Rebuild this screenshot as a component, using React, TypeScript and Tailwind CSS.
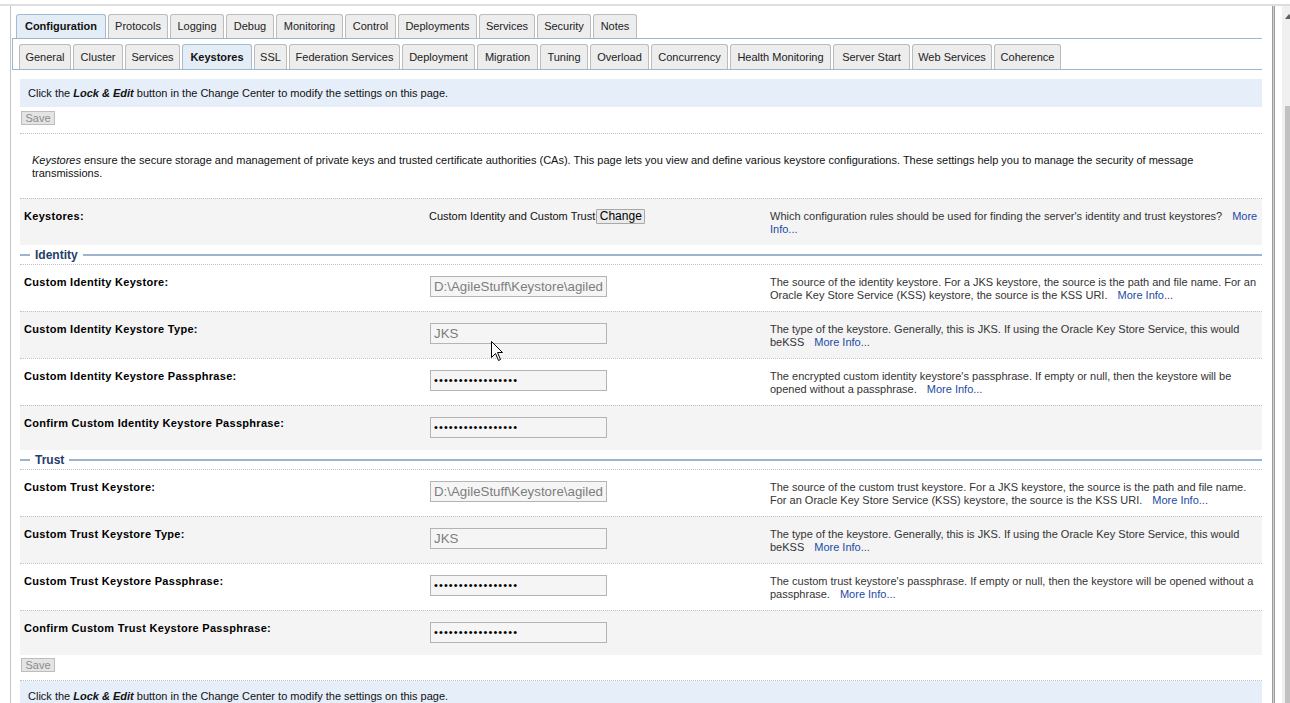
import React from 'react';

// Tabs across the top of the settings page
interface Tab {
  label: string;
  w: string;
  active?: boolean;
}

const mainTabs: Tab[] = [
  { label: 'Configuration', w: 'w-[90px]', active: true },
  { label: 'Protocols', w: 'w-[60px]' },
  { label: 'Logging', w: 'w-[54px]' },
  { label: 'Debug', w: 'w-[48px]' },
  { label: 'Monitoring', w: 'w-[67px]' },
  { label: 'Control', w: 'w-[51px]' },
  { label: 'Deployments', w: 'w-[79px]' },
  { label: 'Services', w: 'w-[56px]' },
  { label: 'Security', w: 'w-[54px]' },
  { label: 'Notes', w: 'w-[44px]' },
];

const subTabs: Tab[] = [
  { label: 'General', w: 'w-[52px]' },
  { label: 'Cluster', w: 'w-[50px]' },
  { label: 'Services', w: 'w-[55px]' },
  { label: 'Keystores', w: 'w-[70px]', active: true },
  { label: 'SSL', w: 'w-[33px]' },
  { label: 'Federation Services', w: 'w-[111px]' },
  { label: 'Deployment', w: 'w-[73px]' },
  { label: 'Migration', w: 'w-[61px]' },
  { label: 'Tuning', w: 'w-[48px]' },
  { label: 'Overload', w: 'w-[59px]' },
  { label: 'Concurrency', w: 'w-[77px]' },
  { label: 'Health Monitoring', w: 'w-[101px]' },
  { label: 'Server Start', w: 'w-[77px]' },
  { label: 'Web Services', w: 'w-[80px]' },
  { label: 'Coherence', w: 'w-[67px]' },
];

interface Field {
  label: string;
  kind: 'text' | 'password';
  value?: string;
  help?: [string, string];
  last?: boolean;
}

const identityFields: Field[] = [
  {
    label: 'Custom Identity Keystore:',
    kind: 'text',
    value: 'D:\\AgileStuff\\Keystore\\agiled',
    help: [
      'The source of the identity keystore. For a JKS keystore, the source is the path and file name. For an',
      'Oracle Key Store Service (KSS) keystore, the source is the KSS URI.',
    ],
  },
  {
    label: 'Custom Identity Keystore Type:',
    kind: 'text',
    value: 'JKS',
    help: [
      'The type of the keystore. Generally, this is JKS. If using the Oracle Key Store Service, this would',
      'beKSS',
    ],
  },
  {
    label: 'Custom Identity Keystore Passphrase:',
    kind: 'password',
    help: [
      "The encrypted custom identity keystore's passphrase. If empty or null, then the keystore will be",
      'opened without a passphrase.',
    ],
  },
  { label: 'Confirm Custom Identity Keystore Passphrase:', kind: 'password', last: true },
];

const trustFields: Field[] = [
  {
    label: 'Custom Trust Keystore:',
    kind: 'text',
    value: 'D:\\AgileStuff\\Keystore\\agiled',
    help: [
      'The source of the custom trust keystore. For a JKS keystore, the source is the path and file name.',
      'For an Oracle Key Store Service (KSS) keystore, the source is the KSS URI.',
    ],
  },
  {
    label: 'Custom Trust Keystore Type:',
    kind: 'text',
    value: 'JKS',
    help: [
      'The type of the keystore. Generally, this is JKS. If using the Oracle Key Store Service, this would',
      'beKSS',
    ],
  },
  {
    label: 'Custom Trust Keystore Passphrase:',
    kind: 'password',
    help: [
      "The custom trust keystore's passphrase. If empty or null, then the keystore will be opened without a",
      'passphrase.',
    ],
  },
  { label: 'Confirm Custom Trust Keystore Passphrase:', kind: 'password', last: true },
];

const TabButton: React.FC<{ tab: Tab; h: string }> = ({ tab, h }) => (
  <div
    className={`${tab.w} ${h} flex items-center justify-center rounded-t-[3px] border border-b-0 whitespace-nowrap ${
      tab.active
        ? 'bg-[#e4edf6] border-[#a4bcd3] font-bold text-[#111]'
        : 'bg-[#ededed] border-[#bcbcbc] text-[#222]'
    }`}
  >
    {tab.label}
  </div>
);

const MoreInfo = () => <span className="text-[#1c4ba6] ml-[10px]">More Info...</span>;

const SaveButton = () => (
  <div className="ml-[1px] w-[34px] h-[14px] border border-[#bdbdbd] bg-[#e4e4e4] text-[#8c8c8c] flex items-center justify-center text-[11px]">
    Save
  </div>
);

const Dotted = () => <div className="border-t border-dotted border-[#bfbfbf]" />;

// Section heading with rule lines on both sides
const SectionHeader: React.FC<{ title: string }> = ({ title }) => (
  <div className="h-[19px] shrink-0 flex items-center gap-[5px] pt-[1px]">
    <div className="w-[10px] h-[2px] bg-[#9cb4cd]" />
    <span className="font-bold text-[12px] text-[#1f3d6a]">{title}</span>
    <div className="flex-1 h-[2px] bg-[#9cb4cd]" />
  </div>
);

const FieldRow: React.FC<{ field: Field; gray: boolean }> = ({ field, gray }) => (
  <div
    className={`flex shrink-0 border-t border-dotted border-[#c2c2c2] ${field.last ? 'h-[45px]' : 'h-[47px]'} ${
      gray ? 'bg-[#f4f4f4]' : 'bg-white'
    }`}
  >
    <div className="w-[409px] pl-[4px] pt-[11px] font-bold tracking-[0.3px] text-[#000]">{field.label}</div>
    <div className="w-[341px] pt-[11px] pl-[1px]">
      <div className="w-[177px] h-[21px] border border-[#b4b4b4] bg-[#f5f5f5] flex items-center pl-[3px] overflow-hidden whitespace-nowrap">
        {field.kind === 'text' ? (
          <span className="text-[13.3px] text-[#7d7d7d]">{field.value}</span>
        ) : (
          <span className="text-[11px] text-[#000] tracking-[1.1px]">•••••••••••••••••</span>
        )}
      </div>
    </div>
    <div className="flex-1 pt-[11px] pr-[4px] text-[#333] whitespace-nowrap">
      {field.help && (
        <>
          {field.help[0]}
          <br />
          {field.help[1]}
          <MoreInfo />
        </>
      )}
    </div>
  </div>
);

const App: React.FC = () => {
  return (
    <div
      className="relative w-[1290px] h-[703px] overflow-hidden bg-white text-[11px] leading-[13px] flex flex-col"
      style={{ fontFamily: '"Liberation Sans", Arial, sans-serif' }}
    >
      {/* Top frame edge */}
      <div className="h-[4px] shrink-0" />
      <div className="h-[2px] shrink-0 bg-[#dedede]" />

      <div className="flex flex-1 min-h-0">
        <div className="w-[10px] shrink-0" />

        {/* Main settings panel */}
        <div className="w-[1262px] shrink-0 border-l border-[#c4c4c4] flex flex-col">
          {/* Tabs */}
          <div className="ml-[1px] mr-[10px] shrink-0">
            <div className="flex items-end gap-[2px] pl-[4px] pt-[8px] border-b border-[#9cb6ce]">
              {mainTabs.map((t) => (
                <TabButton key={t.label} tab={t} h="h-[24px]" />
              ))}
            </div>
            <div className="flex items-end gap-[2px] pl-[6px] pt-[5px] border-l border-b border-[#9cb6ce]">
              {subTabs.map((t) => (
                <TabButton key={t.label} tab={t} h="h-[25px]" />
              ))}
            </div>
          </div>

          <div className="mt-[9px] ml-[9px] mr-[10px] h-[28px] shrink-0 bg-[#e6eef9] pl-[8px] flex items-center text-[#111]">
            <span>
              Click the <span className="font-bold italic">Lock &amp; Edit</span> button in the Change Center to
              modify the settings on this page.
            </span>
          </div>

          <div className="ml-[9px] mr-[10px] flex flex-col shrink-0">
            <div className="mt-[4px]">
              <SaveButton />
            </div>
            <div className="mt-[8px]">
              <Dotted />
            </div>

            {/* Intro text */}
            <div className="h-[64px] shrink-0 pt-[20px] pl-[12px] text-[#111]">
              <span className="italic">Keystores</span> ensure the secure storage and management of private keys and
              trusted certificate authorities (CAs). This page lets you view and define various keystore
              configurations. These settings help you to manage the security of message
              <br />
              transmissions.
            </div>

            {/* Keystores selection row */}
            <div className="flex shrink-0 h-[47px] border-t border-dotted border-[#c2c2c2] bg-[#f4f4f4]">
              <div className="w-[409px] pl-[4px] pt-[11px] font-bold tracking-[0.3px] text-[#000]">Keystores:</div>
              <div className="w-[341px] pt-[10px] flex items-start">
                <span className="pt-[1px] text-[#111]">Custom Identity and Custom Trust</span>
                <div className="ml-[1px] w-[49px] h-[15px] border border-[#a8a8a8] bg-[#ebebeb] rounded-[1px] flex items-center justify-center text-[12px] text-[#000]">
                  Change
                </div>
              </div>
              <div className="flex-1 pt-[11px] text-[#333] whitespace-nowrap">
                Which configuration rules should be used for finding the server's identity and trust keystores?
                <span className="text-[#1c4ba6] ml-[10px]">More</span>
                <br />
                <span className="text-[#1c4ba6]">Info...</span>
              </div>
            </div>

            <SectionHeader title="Identity" />
            {identityFields.map((f, i) => (
              <FieldRow key={f.label} field={f} gray={i % 2 === 1} />
            ))}

            <SectionHeader title="Trust" />
            {trustFields.map((f, i) => (
              <FieldRow key={f.label} field={f} gray={i % 2 === 1} />
            ))}

            <div className="mt-[3px]">
              <SaveButton />
            </div>
            <div className="mt-[8px]">
              <Dotted />
            </div>
            <div className="h-[30px] shrink-0 bg-[#e6eef9] pl-[8px] pt-[9px] text-[#111]">
              Click the <span className="font-bold italic">Lock &amp; Edit</span> button in the Change Center to
              modify the settings on this page.
            </div>
          </div>
        </div>

        {/* Frame divider */}
        <div className="w-[3px] shrink-0 border-x border-[#9c9c9c] bg-[#d2d2d2]" />
        <div className="w-[7px] shrink-0" />

        {/* Scrollbar */}
        <div className="w-[8px] shrink-0 bg-[#f0f0f0] flex flex-col">
          <div className="h-[100px] pt-[8px] pl-[3px]">
            <svg width="8" height="5" viewBox="0 0 8 5">
              <polygon points="4,0 8,5 0,5" fill="#606060" />
            </svg>
          </div>
          <div className="flex-1 ml-[3px] bg-[#c1c1c1]" />
        </div>
      </div>

      {/* Mouse pointer */}
      <svg className="absolute left-[491px] top-[341px]" width="13" height="21" viewBox="0 0 13 21">
        <polygon
          points="0.5,0.5 0.5,16.5 4.5,12.5 7.5,19.5 9.5,18.5 6.5,11.5 11.5,11.5"
          fill="#fff"
          stroke="#000"
          strokeWidth="1"
          strokeLinejoin="round"
        />
      </svg>
    </div>
  );
};

export default App;
